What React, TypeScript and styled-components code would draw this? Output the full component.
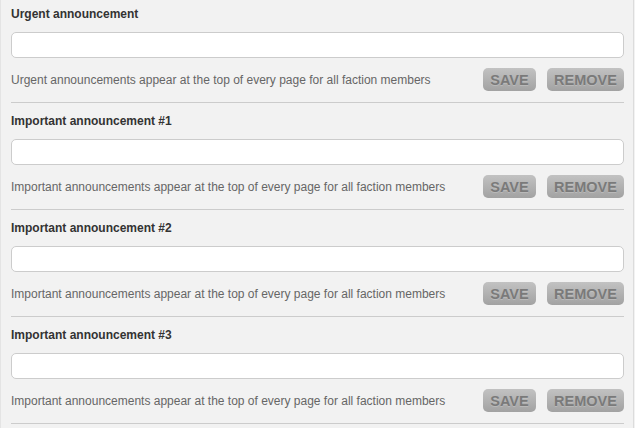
import React from "react";
import styled, { createGlobalStyle } from "styled-components";

const GlobalStyle = createGlobalStyle`
    body {
        margin: 0;
        background: #f2f2f2;
        font-family: Arial, "Liberation Sans", sans-serif;
    }
`

const Panel = styled.div`
    width: 632px;
    min-height: 428px;
    border-left: 1px solid #e4e4e4;
    border-right: 1px solid #dcdcdc;
    background: #f2f2f2;
    overflow: hidden;
`

const Section = styled.div`
    margin: 0 9px 0 10px;
    padding: 10px 0 11px;
    border-bottom: 1px solid #cccccc;

    &:first-child {
        padding-top: 6px;
    }
`

const Title = styled.div`
    font-size: 12px;
    line-height: 16px;
    font-weight: bold;
    color: #333333;
    margin-bottom: 10px;
`

const Input = styled.input`
    display: block;
    box-sizing: border-box;
    width: 100%;
    height: 26px;
    margin: 0;
    border: 1px solid #cccccc;
    border-radius: 5px;
    background: #ffffff;
    outline: none;
`

const Row = styled.div`
    display: flex;
    align-items: center;
    gap: 11px;
    margin-top: 10px;
`

const Hint = styled.span`
    flex: 1;
    font-size: 12px;
    color: #666666;
`

const Button = styled.button<{ $w: number }>`
    width: ${p => p.$w}px;
    height: 23px;
    padding: 0;
    border: none;
    border-radius: 5px;
    background: linear-gradient(#c2c2c2, #a2a2a2);
    color: #7a7a7a;
    font-family: Arial, "Liberation Sans", sans-serif;
    font-size: 14.5px;
    font-weight: bold;
    text-shadow: 0 1px 0 rgba(255, 255, 255, 0.2);
    cursor: default;
`

const items = [
    { title: "Urgent announcement", hint: "Urgent announcements appear at the top of every page for all faction members" },
    { title: "Important announcement #1", hint: "Important announcements appear at the top of every page for all faction members" },
    { title: "Important announcement #2", hint: "Important announcements appear at the top of every page for all faction members" },
    { title: "Important announcement #3", hint: "Important announcements appear at the top of every page for all faction members" },
]

export default function App() {
    return (
        <>
            <GlobalStyle />
            <Panel>
                {items.map(item => (
                    <Section key={item.title}>
                        <Title>{item.title}</Title>
                        <Input type="text" />
                        <Row>
                            <Hint>{item.hint}</Hint>
                            <Button $w={53}>SAVE</Button>
                            <Button $w={77}>REMOVE</Button>
                        </Row>
                    </Section>
                ))}
            </Panel>
        </>
    );
}
